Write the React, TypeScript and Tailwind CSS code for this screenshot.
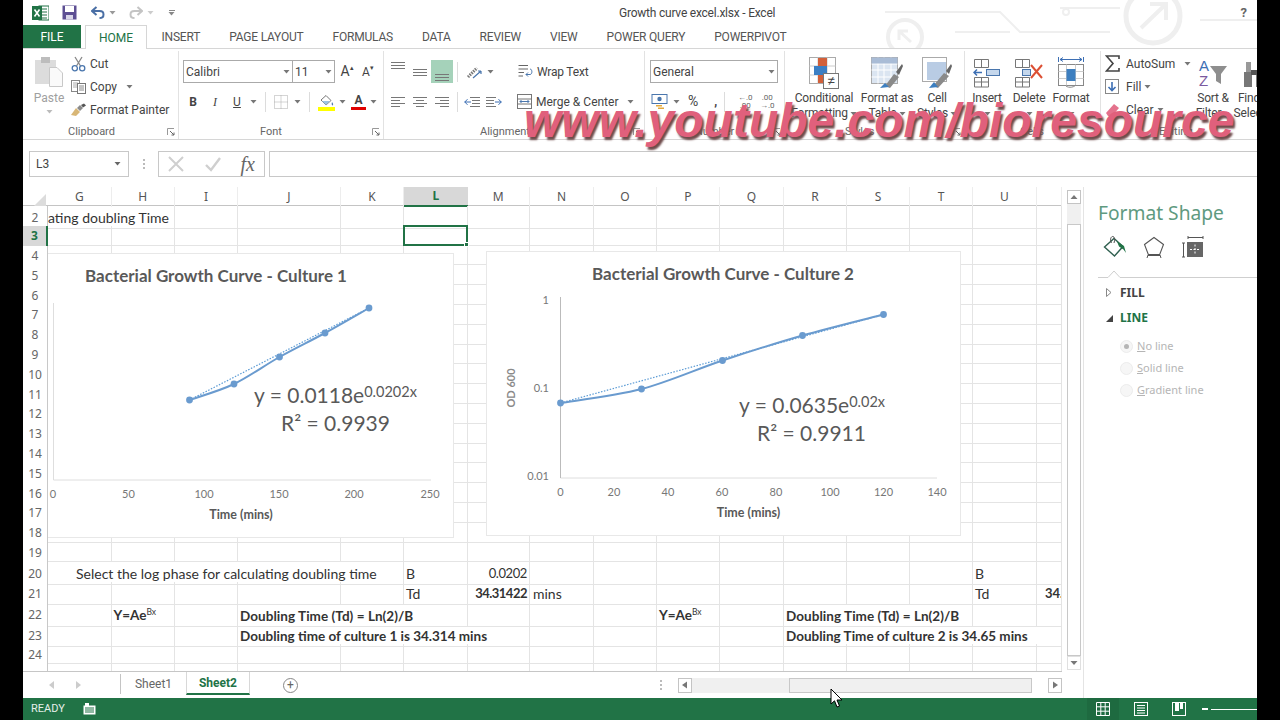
import React from "react";

const Caret = ({ c = "#777" }: { c?: string }) => (
  <svg width="7" height="4" viewBox="0 0 7 4" className="shrink-0"><path d="M0.5 0H6.5L3.5 3.5Z" fill={c} /></svg>
);

const Launcher = () => (
  <svg width="8" height="8" viewBox="0 0 8 8" className="shrink-0">
    <path d="M0.5 7V0.5H7" stroke="#999" fill="none" />
    <path d="M3 3L7 7M7 4.5V7H4.5" stroke="#666" fill="none" />
  </svg>
);

const Lines = ({ r, w = 16 }: { r: number[][]; w?: number }) => (
  <svg width={w} height="12" viewBox={`0 0 ${w} 12`} className="shrink-0">
    {r.map((l, i) => (
      <path key={i} d={`M${l[0]} ${l[2]}.5H${l[1]}`} stroke="#777" />
    ))}
  </svg>
);

const ExcelLogo = () => (
  <svg width="17" height="16" viewBox="0 0 17 16">
    <rect x="7" y="1" width="10" height="14" fill="#fff" stroke="#217346" />
    <path d="M10 4h5M10 7h5M10 10h5M10 13h5" stroke="#217346" />
    <rect x="0" y="1" width="10" height="14" fill="#217346" />
    <path d="M2.5 4.5L7.5 11.5M7.5 4.5L2.5 11.5" stroke="#fff" strokeWidth="1.6" />
  </svg>
);

const Save = () => (
  <svg width="15" height="15" viewBox="0 0 15 15">
    <rect x="0.5" y="0.5" width="14" height="14" fill="#5d4f93" />
    <rect x="3" y="1" width="9" height="6" fill="#fff" />
    <rect x="4" y="10" width="7" height="4.5" fill="#d9d6e8" />
  </svg>
);

const Undo = ({ c, flip }: { c: string; flip?: boolean }) => (
  <svg width="14" height="13" viewBox="0 0 14 13" className={flip ? "-scale-x-100" : ""}>
    <path d="M2 5H8.5C11 5 12.5 6.6 12.5 8.4C12.5 10.5 11 12 8.5 12" stroke={c} strokeWidth="2" fill="none" />
    <path d="M5.5 1L1 5L5.5 9" stroke={c} strokeWidth="2" fill="none" />
  </svg>
);

const Scissors = () => (
  <svg width="15" height="16" viewBox="0 0 15 16" fill="none">
    <path d="M4 1L9.5 10M11 1L5.5 10" stroke="#888" strokeWidth="1.3" />
    <circle cx="3.8" cy="12.2" r="2.6" stroke="#4a76ad" strokeWidth="1.3" />
    <circle cx="11.2" cy="12.2" r="2.6" stroke="#4a76ad" strokeWidth="1.3" />
  </svg>
);

const CopyIcon = () => (
  <svg width="15" height="14" viewBox="0 0 15 14" fill="#fff">
    <rect x="0.5" y="0.5" width="8" height="11" stroke="#888" />
    <path d="M2 3h5M2 5h5M2 7h5" stroke="#aaa" />
    <rect x="6.5" y="3.5" width="8" height="10" stroke="#777" />
    <path d="M8 6h5M8 8h5M8 10h5" stroke="#888" />
  </svg>
);

const Painter = () => (
  <svg width="16" height="14" viewBox="0 0 16 14">
    <path d="M0 12L5 5L9 9L5 13Z" fill="#d8b676" />
    <path d="M6 5L9 2L12 5L9 8Z" fill="#8a8a8a" />
    <path d="M10 2L13 0.5L15 2.5L12 4.5Z" fill="#555" />
  </svg>
);

const PasteIcon = () => (
  <svg width="28" height="30" viewBox="0 0 28 30">
    <rect x="0" y="3" width="21" height="24" fill="#dcdcdc" />
    <rect x="6" y="0" width="9" height="6" fill="#bdbdbd" />
    <path d="M14.5 10.5H22L27.5 16V29.5H14.5Z" fill="#fafafa" stroke="#c8c8c8" />
  </svg>
);

const FillColor = () => (
  <svg width="17" height="17" viewBox="0 0 17 17">
    <path d="M3 6L8 1.5L13 6.5L8 11Z" fill="#fff" stroke="#777" />
    <path d="M4 7L12 7L8 11Z" fill="#9ec3e6" />
    <path d="M14 8c1 1.5 1.5 2 1 3s-2 0-1-3" fill="#4a76ad" />
    <rect x="0" y="13" width="17" height="4" fill="#ffff00" />
  </svg>
);

const Borders = () => (
  <svg width="14" height="14" viewBox="0 0 14 14" fill="none">
    <path d="M0.5 0.5H13.5V13.5H0.5ZM7 0.5V13.5M0.5 7H13.5" stroke="#aaa" strokeDasharray="1 1" />
  </svg>
);

const Orientation = () => (
  <svg width="18" height="14" viewBox="0 0 18 14" fill="none">
    <path d="M2 12L11 3" stroke="#777" strokeWidth="3" strokeDasharray="1.5 1" />
    <path d="M7 13L15 6M15 6L12 6M15 6L15 9" stroke="#4a76ad" strokeWidth="1.2" />
  </svg>
);

const Indent = ({ right }: { right?: boolean }) => (
  <svg width="16" height="12" viewBox="0 0 16 12" fill="none" className={right ? "-scale-x-100" : ""}>
    <path d="M6 1.5H16M8 4.5H16M8 7.5H16M6 10.5H16" stroke="#777" />
    <path d="M0.5 6H7M3.5 3.2L0.8 6L3.5 8.8" stroke="#3d6fb4" />
  </svg>
);

const WrapIcon = () => (
  <svg width="15" height="15" viewBox="0 0 15 15" fill="none">
    <path d="M0.5 1.5H10M0.5 5H10M0.5 8.5H6M0.5 12H5" stroke="#666" />
    <path d="M8 10.5H12C14.5 10.5 14.5 5 12 5" stroke="#4a76ad" />
    <path d="M10 8.5L8 10.5L10 12.5" stroke="#4a76ad" />
  </svg>
);

const MergeIcon = () => (
  <svg width="15" height="15" viewBox="0 0 15 15" fill="none">
    <rect x="0.5" y="0.5" width="14" height="14" stroke="#777" />
    <path d="M0.5 5H14.5M0.5 10H14.5" stroke="#777" />
    <path d="M3 7.5H12M4.5 6L3 7.5L4.5 9M10.5 6L12 7.5L10.5 9" stroke="#4a76ad" />
  </svg>
);

const Accounting = () => (
  <svg width="17" height="16" viewBox="0 0 17 16">
    <rect x="1" y="0.5" width="15" height="9" fill="#fff" stroke="#4a76ad" />
    <circle cx="8.5" cy="5" r="2.2" fill="#4a76ad" />
    <rect x="5" y="11" width="6" height="1.5" fill="#e4a93c" />
    <rect x="7" y="13.5" width="6" height="1.5" fill="#e4a93c" />
  </svg>
);

const DecIcon = ({ a, b }: { a: string; b: string }) => (
  <div className="flex w-[16px] flex-col items-center text-[8px] leading-[8px] text-[#666]">
    <span>{a}</span>
    <span>{b}</span>
  </div>
);

const CondIcon = () => (
  <svg width="30" height="32" viewBox="0 0 30 32">
    <rect x="0.5" y="0.5" width="26" height="26" fill="#fff" stroke="#aaa" />
    <path d="M9 0.5V26.5M18 0.5V26.5M0.5 9H26.5M0.5 18H26.5" stroke="#ccc" />
    <rect x="9" y="1" width="9" height="8" fill="#d2603a" />
    <rect x="5" y="9" width="13" height="9" fill="#3b7fc4" />
    <rect x="9" y="18" width="9" height="8" fill="#d2603a" />
    <rect x="14.5" y="16.5" width="15" height="15" fill="#fff" stroke="#777" />
    <text x="22" y="28" fontSize="13" fill="#444" textAnchor="middle" fontFamily="Liberation Sans">≠</text>
  </svg>
);

const TableIcon = () => (
  <svg width="32" height="32" viewBox="0 0 32 32">
    <rect x="0.5" y="0.5" width="26" height="26" fill="#dbe5f1" stroke="#aaa" />
    <path d="M7 0.5V26.5M13 0.5V26.5M20 0.5V26.5M0.5 7H26.5M0.5 13H26.5M0.5 20H26.5" stroke="#fff" />
    <rect x="0.5" y="0.5" width="26" height="6" fill="#a9bcd6" />
    <path d="M14 29L23 17L28 20L19 31Z" fill="#8a8a8a" />
    <path d="M9 31L14 26L18 30Z" fill="#3d7fc0" />
    <path d="M25 15L31 7L32 9L28 18Z" fill="#666" />
  </svg>
);

const StylesIcon = () => (
  <svg width="30" height="32" viewBox="0 0 30 32">
    <rect x="0.5" y="0.5" width="24" height="24" fill="#fff" stroke="#aaa" />
    <rect x="5" y="5" width="19" height="18" fill="#b9cce4" />
    <path d="M11 29L22 16L27 19L16 31Z" fill="#8a8a8a" />
    <path d="M7 31L12 25L16 30Z" fill="#3d7fc0" />
    <path d="M24 14L29 7L30 9L27 17Z" fill="#666" />
  </svg>
);

const InsertIcon = () => (
  <svg width="28" height="30" viewBox="0 0 28 30" fill="none">
    <path d="M1.5 1.5H15.5V9.5H1.5ZM8.5 1.5V9.5" stroke="#777" />
    <path d="M1.5 19.5H15.5V29H1.5ZM8.5 19.5V29M1.5 24H15.5" stroke="#777" />
    <rect x="13.5" y="11.5" width="13" height="6" fill="#c5d7ec" stroke="#4a76ad" />
    <path d="M0.5 14.5H9M4 11.5L1 14.5L4 17.5" stroke="#3d6fb4" strokeWidth="1.5" />
  </svg>
);

const DeleteIcon = () => (
  <svg width="30" height="30" viewBox="0 0 30 30" fill="none">
    <path d="M1.5 1.5H15.5V9.5H1.5ZM8.5 1.5V9.5" stroke="#777" />
    <path d="M1.5 19.5H15.5V29H1.5ZM8.5 19.5V29M1.5 24H15.5" stroke="#777" />
    <rect x="8.5" y="11.5" width="8" height="6" fill="#c5d7ec" stroke="#4a76ad" />
    <path d="M17 7L28 20M28 7L17 20" stroke="#dc5034" strokeWidth="2" />
  </svg>
);

const FormatIcon = () => (
  <svg width="28" height="32" viewBox="0 0 28 32" fill="none">
    <path d="M1.5 0V5M26.5 0V5M3 2.5H25M3 2.5L6 0.5M3 2.5L6 4.5M25 2.5L22 0.5M25 2.5L22 4.5" stroke="#3d6fb4" />
    <rect x="1.5" y="7.5" width="25" height="21" stroke="#888" fill="#fff" />
    <path d="M9.5 7.5V28.5M18.5 7.5V28.5M1.5 14.5H26.5M1.5 21.5H26.5" stroke="#ccc" />
    <rect x="9.5" y="12" width="9" height="12" fill="#3d7fc0" />
    <path d="M8 28C10 31 16 31 19 28" stroke="#888" />
  </svg>
);

const SortIcon = () => (
  <svg width="30" height="30" viewBox="0 0 30 30">
    <text x="1" y="13" fontSize="15" fill="#3d6fb4" fontFamily="Liberation Sans">A</text>
    <text x="1" y="28" fontSize="15" fill="#7a5aa0" fontFamily="Liberation Sans">Z</text>
    <path d="M12 8H29L23 16V26L18 23V16Z" fill="#8e8e8e" />
  </svg>
);

const FindIcon = () => (
  <svg width="24" height="30" viewBox="0 0 24 30">
    <rect x="2" y="14" width="8" height="15" fill="#777" />
    <rect x="14" y="14" width="8" height="15" fill="#777" />
    <rect x="4" y="4" width="5" height="10" fill="#999" />
    <rect x="15" y="4" width="5" height="10" fill="#999" />
    <rect x="9" y="12" width="6" height="5" fill="#555" />
  </svg>
);

const BigBtn = ({ w, icon, a, b }: { w: string; icon: React.ReactNode; a: string; b?: string }) => (
  <div className={`flex ${w} shrink-0 flex-col items-center tracking-[-0.2px]`}>
    <div className="flex h-[32px] items-center justify-center">{icon}</div>
    <div className="mt-[2px] whitespace-nowrap leading-[15px]">{a}</div>
    <div className="flex h-[15px] items-center gap-[2px] whitespace-nowrap leading-[15px]">
      {b}
      <Caret />
    </div>
  </div>
);

const Sep = ({ h = "h-[20px]", m = "mx-[5px]" }: { h?: string; m?: string }) => <div className={`${h} ${m} w-px shrink-0 bg-[#dcdcdc]`} />;

const Group = ({ w, label, pl, launcher, children }: { w: string; label: string; pl: string; launcher?: boolean; children: React.ReactNode }) => (
  <div className={`${w} flex shrink-0 flex-col border-r border-[#e2e2e2]`}>
    <div className="h-[76px] shrink-0 overflow-hidden">{children}</div>
    <div className={`flex h-[10px] shrink-0 items-center ${pl} pr-[3px] text-[11px] text-[#666]`}>
      <span>{label}</span>
      {launcher && <span className="ml-auto"><Launcher /></span>}
    </div>
  </div>
);

const COLS = ["G", "H", "I", "J", "K", "L", "M", "N", "O", "P", "Q", "R", "S", "T", "U", "V"];
const TEMPLATE = "grid grid-cols-[25px_63.5px_63.5px_63px_103px_63px_63.5px_62.5px_64px_63px_63px_64px_63px_63px_63px_64px_25px]";

type Cell = { t: React.ReactNode; c?: string };
type Row = { n: number; h: string; cells?: Record<string, Cell>; hide?: string };

const Exp = () => (
  <>
    Y=Ae<sup className="relative -top-[4px] align-baseline text-[8.5px] font-normal">Bx</sup>
  </>
);

const BOLD = "text-[13.5px] font-bold";

const rows: Row[] = [
  { n: 2, h: "h-[19.8px]", cells: { G: { t: "ating doubling Time", c: "pl-0" } }, hide: "G" },
  { n: 3, h: "h-[19.8px]" },
  ...[4, 5, 6, 7, 8, 9, 10, 11, 12, 13, 14, 15, 16, 17, 18, 19].map((n) => ({ n, h: "h-[19.8px]" })),
  {
    n: 20,
    h: "h-[19.8px]",
    cells: {
      G: { t: "Select the log phase for calculating doubling time", c: "pl-[28px]" },
      L: { t: "B" },
      M: { t: "0.0202", c: "justify-end text-[13px] tracking-[-0.4px]" },
      U: { t: "B" },
    },
    hide: "GHIJ",
  },
  {
    n: 21,
    h: "h-[19.8px]",
    cells: {
      L: { t: "Td" },
      M: { t: "34.31422", c: "justify-end text-[13px] font-bold tracking-[-0.5px]" },
      N: { t: "mins", c: "pl-[3px]" },
      U: { t: "Td" },
      V: { t: "34.", c: "pl-[8px] pr-0 text-[13px] font-bold" },
    },
  },
  {
    n: 22,
    h: "h-[22.6px]",
    cells: {
      H: { t: <Exp />, c: `${BOLD} pt-[3px]` },
      J: { t: "Doubling Time (Td) = Ln(2)/B", c: `${BOLD} pt-[4px] tracking-[0.05px]` },
      P: { t: <Exp />, c: `${BOLD} pt-[3px]` },
      R: { t: "Doubling Time (Td) = Ln(2)/B", c: `${BOLD} pt-[4px] tracking-[0.05px]` },
    },
    hide: "JKRS",
  },
  {
    n: 23,
    h: "h-[19.8px]",
    cells: {
      J: { t: "Doubling time of culture 1 is 34.314 mins", c: BOLD },
      R: { t: "Doubling Time of culture 2 is 34.65 mins", c: BOLD },
    },
    hide: "JKLRSTU",
  },
  { n: 24, h: "h-[19.8px]" },
];

const smooth = (p: number[][]) => {
  let d = `M${p[0][0]} ${p[0][1]}`;
  for (let i = 0; i < p.length - 1; i++) {
    const a = p[Math.max(i - 1, 0)];
    const b = p[i];
    const c = p[i + 1];
    const e = p[Math.min(i + 2, p.length - 1)];
    d += `C${b[0] + (c[0] - a[0]) / 6} ${b[1] + (c[1] - a[1]) / 6} ${c[0] - (e[0] - b[0]) / 6} ${c[1] - (e[1] - b[1]) / 6} ${c[0]} ${c[1]}`;
  }
  return d;
};

const Series = ({ pts, from, to }: { pts: number[][]; from: number[]; to: number[] }) => (
  <>
    <path d={`M${from[0]} ${from[1]}L${to[0]} ${to[1]}`} stroke="#5b9bd5" strokeWidth="1.2" strokeDasharray="1.5 1.5" fill="none" />
    <path d={smooth(pts)} stroke="#6a9bcf" strokeWidth="2" fill="none" />
    {pts.map((p) => (
      <circle key={p[0]} cx={p[0]} cy={p[1]} r="3.4" fill="#6a9bcf" />
    ))}
  </>
);

const ChartText = "fill-[#595959] font-['Lato',sans-serif]";

const Chart1 = () => {
  const pts = [[189.5, 400], [234, 384], [279.5, 357], [325, 333], [369, 308]];
  return (
    <div className="absolute left-[25px] top-[66px] h-[285px] w-[406px] border-b border-r border-t border-[#e8e8e8] bg-white">
      <svg width="405" height="283" viewBox="48 254 405 283" className={ChartText}>
        <path d="M53.5 303V480H431" stroke="#dedede" fill="none" />
        <Series pts={pts} from={pts[0]} to={pts[4]} />
        <text x="216" y="281.5" textAnchor="middle" fontSize="17" fontWeight="700">Bacterial Growth Curve - Culture 1</text>
        {([["0", 53], ["50", 128.5], ["100", 204], ["150", 279], ["200", 354], ["250", 430]] as [string, number][]).map(([t, x]) => (
          <text key={t} x={x} y="497.5" textAnchor="middle" fontSize="11" className="fill-[#777]">{t}</text>
        ))}
        <text x="241" y="519" textAnchor="middle" fontSize="12.5" fontWeight="700">Time (mins)</text>
        <text x="254" y="403" fontSize="21">y = 0.0118e<tspan dy="-6" fontSize="14.5">0.0202x</tspan></text>
        <text x="281" y="431" fontSize="21">R² = 0.9939</text>
      </svg>
    </div>
  );
};

const Chart2 = () => {
  const pts = [[560.5, 403], [641.5, 389], [722.5, 360.5], [802.5, 335.5], [883.5, 314.5]];
  return (
    <div className="absolute left-[463px] top-[64px] h-[285px] w-[475px] border border-[#e8e8e8] bg-white">
      <svg width="473" height="283" viewBox="487 252 473 283" className={ChartText}>
        <path d="M560.5 297V478H937" stroke="#dedede" fill="none" />
        <path d="M560.5 297V478" stroke="#bbb" fill="none" />
        <Series pts={pts} from={pts[0]} to={pts[4]} />
        <text x="723" y="279.5" textAnchor="middle" fontSize="17" fontWeight="700">Bacterial Growth Curve - Culture 2</text>
        {([["0", 560.5], ["20", 614], ["40", 668], ["60", 722], ["80", 776], ["100", 830], ["120", 883.5], ["140", 937]] as [string, number][]).map(([t, x]) => (
          <text key={t} x={x} y="496" textAnchor="middle" fontSize="11" className="fill-[#777]">{t}</text>
        ))}
        {([["1", 304], ["0.1", 392], ["0.01", 480]] as [string, number][]).map(([t, y]) => (
          <text key={t} x="549" y={y} textAnchor="end" fontSize="11" className="fill-[#777]">{t}</text>
        ))}
        <text x="0" y="0" transform="translate(515 388) rotate(-90)" textAnchor="middle" fontSize="11" fontWeight="700" className="fill-[#8a8a8a]">OD 600</text>
        <text x="748.5" y="517" textAnchor="middle" fontSize="12.5" fontWeight="700">Time (mins)</text>
        <text x="739" y="413" fontSize="21">y = 0.0635e<tspan dy="-6" fontSize="14.5">0.02x</tspan></text>
        <text x="757" y="441" fontSize="21">R² = 0.9911</text>
      </svg>
    </div>
  );
};

const Circuit = () => (
  <svg className="absolute left-[860px] top-0" width="374" height="49" viewBox="883 0 374 49" fill="none" stroke="#efefef" strokeWidth="2">
    <circle cx="905" cy="37" r="17" strokeWidth="4" />
    <path d="M911 42L899 31M899 40V31H908" strokeWidth="3" />
    <circle cx="1153" cy="16" r="27" strokeWidth="5" />
    <path d="M1141 28L1166 4M1150 4H1166V20" strokeWidth="4" />
    <path d="M885 12H1000L1020 32H1110M955 32H1010M1060 8H1120M1200 20H1257" />
    <circle cx="1066" cy="12" r="3" />
  </svg>
);

const PaintPanel = () => (
  <svg width="24" height="24" viewBox="0 0 24 24" fill="none">
    <path d="M1.5 12L11 3.5L20 11.5L11.5 21Z" stroke="#2f5f4f" strokeWidth="1.4" fill="#fff" />
    <path d="M8.5 8C6.5 5 8 1 10 1.5C12 2 12 5 11 8" stroke="#555" />
    <path d="M14 6.5L21 11L23 18L20.5 14.5L16 11.5Z" fill="#217346" />
  </svg>
);

const Pentagon = () => (
  <svg width="24" height="24" viewBox="0 0 24 24" fill="none" stroke="#555">
    <path d="M12 2.5L21.5 9.5L17.5 20H6.5L2.5 9.5Z" strokeWidth="1.1" />
    <path d="M6 20H18" strokeWidth="2" />
    <path d="M6 20L5 23M18 20L19 23" />
  </svg>
);

const SizePanel = () => (
  <svg width="24" height="24" viewBox="0 0 24 24" fill="none">
    <path d="M7 1V4M22 1V4M7 2.5H22" stroke="#555" />
    <path d="M1 8H4M1 22H4M2.5 8V22" stroke="#555" />
    <rect x="6" y="7" width="16" height="15" fill="#666" />
    <path d="M14 9.5V19.5M9 14.5H19" stroke="#fff" strokeDasharray="2 1.5" />
  </svg>
);

const Radio = ({ on }: { on?: boolean }) => (
  <span className="flex h-[13px] w-[13px] items-center justify-center rounded-full border border-[#ececec] bg-[#f6f6f6]">
    {on && <span className="h-[5px] w-[5px] rounded-full bg-[#b5b5b5]" />}
  </span>
);

const ScrollBtn = ({ d, cls }: { d: string; cls: string }) => (
  <div className={`flex shrink-0 items-center justify-center border border-[#c4c4c4] bg-white ${cls}`}>
    <svg width="8" height="8" viewBox="0 0 8 8"><path d={d} fill="#777" /></svg>
  </div>
);

const Dots = () => (
  <span className="flex flex-col gap-[2px]">
    <span className="h-[2px] w-[2px] bg-[#bbb]" />
    <span className="h-[2px] w-[2px] bg-[#bbb]" />
    <span className="h-[2px] w-[2px] bg-[#bbb]" />
  </span>
);

export default function App() {
  return (
    <div className="flex h-[720px] w-[1280px] overflow-hidden bg-black font-['Roboto',sans-serif] text-[12px] text-[#444]">
      <div className="w-[23px] shrink-0" />
      <div className="relative flex h-[720px] w-[1234px] shrink-0 flex-col overflow-hidden bg-white">
        <Circuit />
        {/* title bar */}
        <div className="relative flex h-[25px] shrink-0 items-center">
          <div className="flex w-[596px] items-center">
            <span className="ml-[9px]"><ExcelLogo /></span>
            <span className="ml-[13px]"><Save /></span>
            <span className="ml-[14px]"><Undo c="#4a6fa5" /></span>
            <span className="ml-[4px]"><Caret c="#999" /></span>
            <span className="ml-[13px]"><Undo c="#c4c4c4" flip /></span>
            <span className="ml-[4px]"><Caret c="#ccc" /></span>
            <span className="ml-[14px] flex flex-col items-center gap-[1px]">
              <span className="h-px w-[6px] bg-[#888]" />
              <Caret c="#888" />
            </span>
          </div>
          <span className="tracking-[-0.22px] text-[#444]">Growth curve excel.xlsx - Excel</span>
          <span className="ml-auto mr-[10px] text-[13px] font-bold text-[#666]">?</span>
        </div>
        {/* tabs */}
        <div className="relative z-10 flex h-[24px] shrink-0 items-stretch border-b border-[#d6d6d6]">
          <div className="flex w-[58px] items-center justify-center bg-[#217346] text-white">FILE</div>
          <div className="z-10 ml-[4px] -mb-px flex w-[62px] items-center justify-center border-x border-t border-[#d6d6d6] bg-white text-[#217346]">HOME</div>
          {["INSERT", "PAGE LAYOUT", "FORMULAS", "DATA", "REVIEW", "VIEW", "POWER QUERY", "POWERPIVOT"].map((t) => (
            <div key={t} className="flex items-center px-[14.5px] tracking-[-0.2px] text-[#555]">{t}</div>
          ))}
        </div>
        {/* ribbon */}
        <div className="flex h-[91px] shrink-0 overflow-hidden border-b border-[#d6d6d6] pt-[2px]">
          <Group w="w-[156px]" label="Clipboard" pl="pl-[45px]" launcher>
            <div className="flex pt-[1px]">
              <div className="ml-[4px] flex w-[44px] flex-col items-center pt-[5px] text-[#a0a0a0]">
                <PasteIcon />
                <span className="mt-[4px] leading-[15px]">Paste</span>
                <span className="mt-[4px]"><Caret c="#bbb" /></span>
              </div>
              <div className="flex flex-col">
                {[
                  [<Scissors />, "Cut"],
                  [<CopyIcon />, "Copy"],
                  [<Painter />, "Format Painter"],
                ].map(([ic, t], i) => (
                  <div key={i} className="flex h-[23px] items-center">
                    <span className="flex w-[19px] justify-start">{ic}</span>
                    <span className="whitespace-nowrap">{t}</span>
                    {i === 1 && <span className="ml-[9px]"><Caret /></span>}
                  </div>
                ))}
              </div>
            </div>
          </Group>
          <Group w="w-[205px]" label="Font" pl="pl-[81px]" launcher>
            <div className="mt-[9px] flex h-[23px] items-stretch pl-[4px]">
              <div className="flex w-[110px] items-center border border-[#aaa] px-[2px]">
                <span>Calibri</span>
                <span className="ml-auto"><Caret /></span>
              </div>
              <div className="-ml-px flex w-[43px] items-center border border-[#aaa] px-[2px]">
                <span>11</span>
                <span className="ml-auto"><Caret /></span>
              </div>
              <span className="ml-[2px] flex w-[20px] items-center justify-center text-[14px]">A<sup className="text-[7px]">▴</sup></span>
              <span className="ml-[1px] flex w-[20px] items-center justify-center text-[12px]">A<sup className="text-[7px]">▾</sup></span>
            </div>
            <div className="mt-[8px] flex h-[22px] items-center pl-[3px]">
              <span className="w-[22px] text-center font-bold">B</span>
              <span className="w-[22px] text-center font-['Liberation_Serif',serif] italic">I</span>
              <span className="w-[22px] text-center underline">U</span>
              <span className="ml-[2px]"><Caret /></span>
              <Sep m="mx-[8px]" />
              <Borders />
              <span className="ml-[6px]"><Caret /></span>
              <Sep m="mx-[8px]" />
              <FillColor />
              <span className="ml-[4px]"><Caret /></span>
              <span className="ml-[5px] flex h-[16px] w-[15px] flex-col items-center font-bold leading-[12px]">
                A
                <span className="mt-[1px] h-[4px] w-[15px] bg-[#e00000]" />
              </span>
              <span className="ml-[4px]"><Caret /></span>
            </div>
          </Group>
          <Group w="w-[261px]" label="Alignment" pl="pl-[96px]" launcher>
            <div className="mt-[9px] flex h-[23px] items-center pl-[3px]">
              <span className="flex h-[23px] w-[22px] items-start justify-center pt-[1px]"><Lines r={[[1, 15, 1], [1, 15, 4], [1, 15, 7]]} /></span>
              <span className="flex h-[23px] w-[22px] items-center justify-center"><Lines r={[[1, 15, 3], [1, 15, 6], [1, 15, 9]]} /></span>
              <span className="flex h-[23px] w-[22px] items-end justify-center bg-[#a5d2ba] pb-[1px]"><Lines r={[[1, 15, 4], [1, 15, 7], [1, 15, 10]]} /></span>
              <Sep m="mx-[4px]" />
              <span className="ml-[4px]"><Orientation /></span>
              <span className="ml-[3px]"><Caret /></span>
              <span className="ml-[24px]"><WrapIcon /></span>
              <span className="ml-[4px] tracking-[-0.2px]">Wrap Text</span>
            </div>
            <div className="mt-[7px] flex h-[23px] items-center pl-[3px]">
              <span className="flex w-[22px] justify-center"><Lines r={[[1, 15, 1], [1, 10, 4], [1, 15, 7], [1, 10, 10]]} /></span>
              <span className="flex w-[22px] justify-center"><Lines r={[[1, 15, 1], [4, 12, 4], [1, 15, 7], [4, 12, 10]]} /></span>
              <span className="flex w-[22px] justify-center"><Lines r={[[1, 15, 1], [6, 15, 4], [1, 15, 7], [6, 15, 10]]} /></span>
              <Sep m="mx-[4px]" />
              <span className="ml-[2px]"><Indent /></span>
              <span className="ml-[6px]"><Indent right /></span>
              <span className="ml-[15px]"><MergeIcon /></span>
              <span className="ml-[4px] whitespace-nowrap">Merge &amp; Center</span>
              <span className="ml-[9px]"><Caret /></span>
            </div>
          </Group>
          <Group w="w-[140px]" label="Number" pl="pl-[50px]" launcher>
            <div className="ml-[5px] mt-[9px] flex h-[23px] w-[128px] items-center border border-[#aaa] px-[2px]">
              <span>General</span>
              <span className="ml-auto"><Caret /></span>
            </div>
            <div className="mt-[7px] flex h-[23px] items-center pl-[6px]">
              <Accounting />
              <span className="ml-[5px]"><Caret /></span>
              <span className="ml-[8px] text-[14px]">%</span>
              <span className="ml-[16px] font-bold">,</span>
              <Sep m="ml-[7px] mr-[12px]" />
              <DecIcon a="←.0" b=".00" />
              <span className="ml-[6px]"><DecIcon a=".00" b="→.0" /></span>
            </div>
          </Group>
          <Group w="w-[180px]" label="Styles" pl="pl-[60px]" launcher>
            <div className="flex pl-[8px] pt-[6px] text-center">
              <BigBtn w="w-[62px]" icon={<CondIcon />} a="Conditional" b="Formatting" />
              <BigBtn w="w-[64px]" icon={<TableIcon />} a="Format as" b="Table" />
              <BigBtn w="w-[36px]" icon={<StylesIcon />} a="Cell" b="Styles" />
            </div>
          </Group>
          <Group w="w-[136px]" label="Cells" pl="pl-[55px]">
            <div className="flex pl-[1px] pt-[6px]">
              <BigBtn w="w-[42px]" icon={<InsertIcon />} a="Insert" />
              <BigBtn w="w-[42px]" icon={<DeleteIcon />} a="Delete" />
              <BigBtn w="w-[42px]" icon={<FormatIcon />} a="Format" />
            </div>
          </Group>
          <div className="flex w-[157px] shrink-0 flex-col overflow-hidden">
            <div className="flex h-[76px] shrink-0">
              <div className="flex w-[95px] shrink-0 flex-col pl-[4px] pt-[1px]">
                <div className="flex h-[23px] items-center">
                  <span className="w-[21px]">
                    <svg width="15" height="17" viewBox="0 0 15 17" fill="none"><path d="M14 4V1H1.5L8 8.5L1.5 16H14V13" stroke="#444" strokeWidth="1.6" /></svg>
                  </span>
                  <span>AutoSum</span>
                  <span className="ml-[9px]"><Caret /></span>
                </div>
                <div className="flex h-[23px] items-center">
                  <span className="w-[21px]">
                    <svg width="14" height="15" viewBox="0 0 14 15" fill="none"><rect x="0.5" y="0.5" width="13" height="14" stroke="#888" /><path d="M7 3V11M3.5 8L7 11.5L10.5 8" stroke="#3d6fb4" strokeWidth="1.6" /></svg>
                  </span>
                  <span>Fill</span>
                  <span className="ml-[3px]"><Caret /></span>
                </div>
                <div className="flex h-[23px] items-center">
                  <span className="w-[21px]">
                    <svg width="15" height="14" viewBox="0 0 15 14"><path d="M1 10L9 1L14 5L7 13H3Z" fill="#e4728c" /></svg>
                  </span>
                  <span>Clear</span>
                  <span className="ml-[3px]"><Caret /></span>
                </div>
              </div>
              <div className="flex pt-[6px]">
                <BigBtn w="w-[34px]" icon={<SortIcon />} a="Sort &" b="Filter" />
                <div className="ml-[7px]">
                  <BigBtn w="w-[34px]" icon={<FindIcon />} a="Find &" b="Select" />
                </div>
              </div>
            </div>
            <div className="flex h-[10px] shrink-0 items-center pl-[58px] text-[11px] text-[#666]">Editing</div>
          </div>
        </div>
        {/* formula bar */}
        <div className="flex h-[47px] shrink-0 items-start pt-[11px]">
          <div className="ml-[6px] flex h-[26px] w-[100px] items-center border border-[#c8c8c8] px-[6px]">
            <span>L3</span>
            <span className="ml-auto mr-[1px]"><Caret c="#666" /></span>
          </div>
          <div className="ml-[14px] flex h-[26px] w-[2px] flex-col items-center justify-center">
            <Dots />
          </div>
          <div className="ml-[13px] flex h-[26px] w-[107px] items-center justify-between border border-[#c8c8c8] pl-[8px] pr-[9px]">
            <svg width="18" height="16" viewBox="0 0 18 16" fill="none"><path d="M2 1L16 15M16 1L2 15" stroke="#cfcfcf" strokeWidth="2" /></svg>
            <svg width="18" height="16" viewBox="0 0 18 16" fill="none"><path d="M2 9L7 14L16 2" stroke="#cfcfcf" strokeWidth="2.4" /></svg>
            <span className="font-['Liberation_Serif',serif] text-[20px] italic text-[#666]">fx</span>
          </div>
          <div className="ml-[4px] h-[26px] flex-1 border-y border-l border-[#c8c8c8]" />
        </div>
        {/* body */}
        <div className="flex h-[511px] shrink-0">
          <div className="flex w-[1061px] shrink-0 flex-col border-r border-[#e4e4e4]">
            <div className="flex h-[484px] shrink-0">
              <div className="relative h-[484px] w-[1039px] shrink-0 overflow-hidden font-['Lato',sans-serif] text-[14px] text-[#333]">
                <div className={`${TEMPLATE} h-[19px] border-b border-[#c4c4c4] font-['Noto_Sans',sans-serif] text-[12px] text-[#555]`}>
                  <div className="flex items-end justify-end pb-[1px] pr-[2px]">
                    <svg width="12" height="12" viewBox="0 0 12 12"><path d="M12 0V12H0Z" fill="#dcdcdc" /></svg>
                  </div>
                  {COLS.map((c) => (
                    <div key={c} className={c === "L" ? "flex items-center justify-center border-b-2 border-[#217346] bg-[#d8d8d8] font-bold text-[#217346]" : "flex items-center justify-center border-r border-[#ededed]"}>
                      {c === "V" ? "" : c}
                    </div>
                  ))}
                </div>
                {rows.map((r) => (
                  <div key={r.n} className={`${TEMPLATE} ${r.h}`}>
                    <div className={r.n === 3 ? "flex items-center justify-center border-r-2 border-[#217346] bg-[#d8d8d8] pt-[1px] font-['Noto_Sans',sans-serif] text-[12px] font-bold text-[#217346]" : "flex items-center justify-center border-r border-[#c8c8c8] pt-[1px] font-['Noto_Sans',sans-serif] text-[12px] text-[#666]"}>
                      {r.n}
                    </div>
                    {COLS.map((c) => {
                      const cell = r.cells?.[c];
                      const sel = r.n === 3 && c === "L";
                      const hidden = r.hide?.includes(c);
                      return (
                        <div key={c} className={`relative flex items-center whitespace-nowrap border-b border-[#e4e4e4] px-[2px] pt-[1px] ${hidden ? "" : "border-r"} ${cell?.c ?? ""} ${c === "V" ? "overflow-hidden" : ""}`}>
                          {cell?.t}
                          {sel && (
                            <div className="absolute -bottom-px -left-px -right-px -top-px z-20 border-2 border-[#217346]">
                              <span className="absolute -bottom-[3px] -right-[3px] h-[5px] w-[5px] border border-white bg-[#217346]" />
                            </div>
                          )}
                        </div>
                      );
                    })}
                  </div>
                ))}
                <div className={`${TEMPLATE} h-[7px]`}>
                  <div className="border-r border-[#c8c8c8]" />
                  {COLS.map((c) => <div key={c} className="border-r border-[#e4e4e4]" />)}
                </div>
                <Chart1 />
                <Chart2 />
              </div>
              <div className="flex w-[22px] shrink-0 flex-col pl-[5px] pt-[3px]">
                <ScrollBtn d="M4 2L7.5 6H0.5Z" cls="h-[14px] w-[14px]" />
                <div className="h-[20px] w-[14px] bg-[#f0f0f0]" />
                <div className="h-[432px] w-[14px] border border-[#c8c8c8] bg-white" />
                <ScrollBtn d="M4 6L0.5 2H7.5Z" cls="h-[14px] w-[14px] border-[#e0e0e0]" />
              </div>
            </div>
            {/* sheet tabs */}
            <div className="flex h-[27px] shrink-0 items-stretch">
              <div className="flex flex-1 items-stretch border-t border-[#c6c6c6]">
                <div className="flex w-[97px] items-center pl-[26px]">
                  <svg width="6" height="8" viewBox="0 0 6 8"><path d="M5 0V8L0 4Z" fill="#ccc" /></svg>
                  <svg className="ml-[21px]" width="6" height="8" viewBox="0 0 6 8"><path d="M0 0V8L5 4Z" fill="#ccc" /></svg>
                </div>
                <div className="mb-[4px] mt-[2px] flex w-[66px] items-center justify-center border-l border-[#c4c4c4] text-[#666]">Sheet1</div>
                <div className="mb-[3px] flex w-[64px] items-center justify-center border-x border-b-2 border-x-[#d8d8d8] border-b-[#217346] pt-[1px] font-bold text-[#217346]">Sheet2</div>
                <div className="ml-[33px] flex items-center">
                  <span className="flex h-[15px] w-[15px] items-center justify-center rounded-full border border-[#888] text-[12px] leading-none text-[#666]">+</span>
                </div>
                <div className="ml-[362px] flex items-center">
                  <Dots />
                </div>
                <div className="ml-[16px] flex items-center">
                  <ScrollBtn d="M1 4L6 0.5V7.5Z" cls="h-[15px] w-[14px]" />
                  <div className="h-[15px] w-[97px] bg-[#f0f0f0]" />
                  <div className="h-[15px] w-[243px] border border-[#c8c8c8] bg-[#f0f0f0]" />
                  <div className="h-[15px] w-[16px]" />
                  <ScrollBtn d="M7 4L2 0.5V7.5Z" cls="h-[15px] w-[14px]" />
                </div>
              </div>
              <div className="w-[22px]" />
            </div>
          </div>
          {/* panel */}
          <div className="w-[173px] shrink-0 bg-white pt-[14px] font-['Noto_Sans',sans-serif]">
            <div className="pl-[14px] text-[19.2px] leading-[24px] text-[#5f9a80]">Format Shape</div>
            <div className="mt-[10px] flex items-center pl-[19px]">
              <PaintPanel />
              <span className="ml-[15px]"><Pentagon /></span>
              <span className="ml-[15px]"><SizePanel /></span>
            </div>
            <div className="ml-[14px] mt-[10px] h-[10px]">
              <svg width="159" height="10" viewBox="0 0 159 10" fill="none">
                <path d="M0 8.5H10L16 2L22 8.5H159" stroke="#cfcfcf" />
              </svg>
            </div>
            <div className="mt-[1px] flex h-[25px] items-center pl-[22px] text-[12px] font-bold text-[#444]">
              <svg width="6" height="9" viewBox="0 0 6 9" fill="none"><path d="M0.5 0.5L5 4.5L0.5 8.5Z" stroke="#888" /></svg>
              <span className="ml-[8px]">FILL</span>
            </div>
            <div className="flex h-[26px] items-center pl-[22px] text-[12px] font-bold text-[#217346]">
              <svg width="7" height="7" viewBox="0 0 7 7"><path d="M7 0V7H0Z" fill="#444" /></svg>
              <span className="ml-[7px]">LINE</span>
            </div>
            <div className="mt-[4px] flex flex-col text-[11px] text-[#b5b5b5]">
              {([["N", "o line", true], ["S", "olid line", false], ["G", "radient line", false]] as [string, string, boolean][]).map(([u, t, on]) => (
                <div key={u} className="flex h-[22px] items-center pl-[36px]">
                  <Radio on={on} />
                  <span className="ml-[4px]"><span className="underline">{u}</span>{t}</span>
                </div>
              ))}
            </div>
          </div>
        </div>
        {/* status bar */}
        <div className="flex h-[22px] shrink-0 items-center bg-[#217346] text-[11px] text-[#e4efe9]">
          <span className="ml-[8px]">READY</span>
          <span className="ml-[18px]">
            <svg width="13" height="12" viewBox="0 0 13 12"><rect x="0.5" y="2.5" width="12" height="9" fill="#fff" /><path d="M2 5h9M2 7h9M2 9h9" stroke="#217346" /><rect x="2" y="0" width="4" height="3" fill="#fff" /></svg>
          </span>
          <div className="ml-auto flex items-center">
            <span className="flex h-[22px] w-[32px] items-center justify-center bg-[#1e6a40]">
              <svg width="14" height="14" viewBox="0 0 14 14" fill="none" stroke="#fff"><path d="M0.5 0.5H13.5V13.5H0.5ZM4.8 0.5V13.5M9.2 0.5V13.5M0.5 4.8H13.5M0.5 9.2H13.5" /></svg>
            </span>
            <span className="ml-[15px]">
              <svg width="14" height="14" viewBox="0 0 14 14" fill="none" stroke="#fff"><rect x="0.5" y="0.5" width="13" height="13" /><path d="M3 3.5H11M3 6H11M3 8.5H11M3 11H11" /></svg>
            </span>
            <span className="ml-[24px]">
              <svg width="14" height="14" viewBox="0 0 14 14"><rect x="0.5" y="0.5" width="13" height="13" fill="none" stroke="#fff" /><rect x="3" y="0" width="4" height="9" fill="#fff" /><rect x="8" y="0" width="3" height="7" fill="#fff" /></svg>
            </span>
            <span className="ml-[16px] h-[2px] w-[6px] bg-white" />
            <span className="ml-[3px] h-px w-[46px] bg-white" />
          </div>
        </div>
        {/* watermark */}
        <div className="absolute left-[501px] top-[95px] z-30 whitespace-nowrap font-['Liberation_Sans',sans-serif] text-[48px] font-bold italic leading-[52px] text-[#e0607c] [text-shadow:2px_3px_2px_#6e4b4b]">
          www.youtube.com/bioresource
        </div>
        {/* cursor */}
        <svg className="absolute left-[807px] top-[688px] z-40" width="14" height="21" viewBox="0 0 14 21">
          <path d="M1 1V16L4.5 12.8L7 19L9.5 18L7 12H12Z" fill="#fff" stroke="#000" />
        </svg>
      </div>
    </div>
  );
}
